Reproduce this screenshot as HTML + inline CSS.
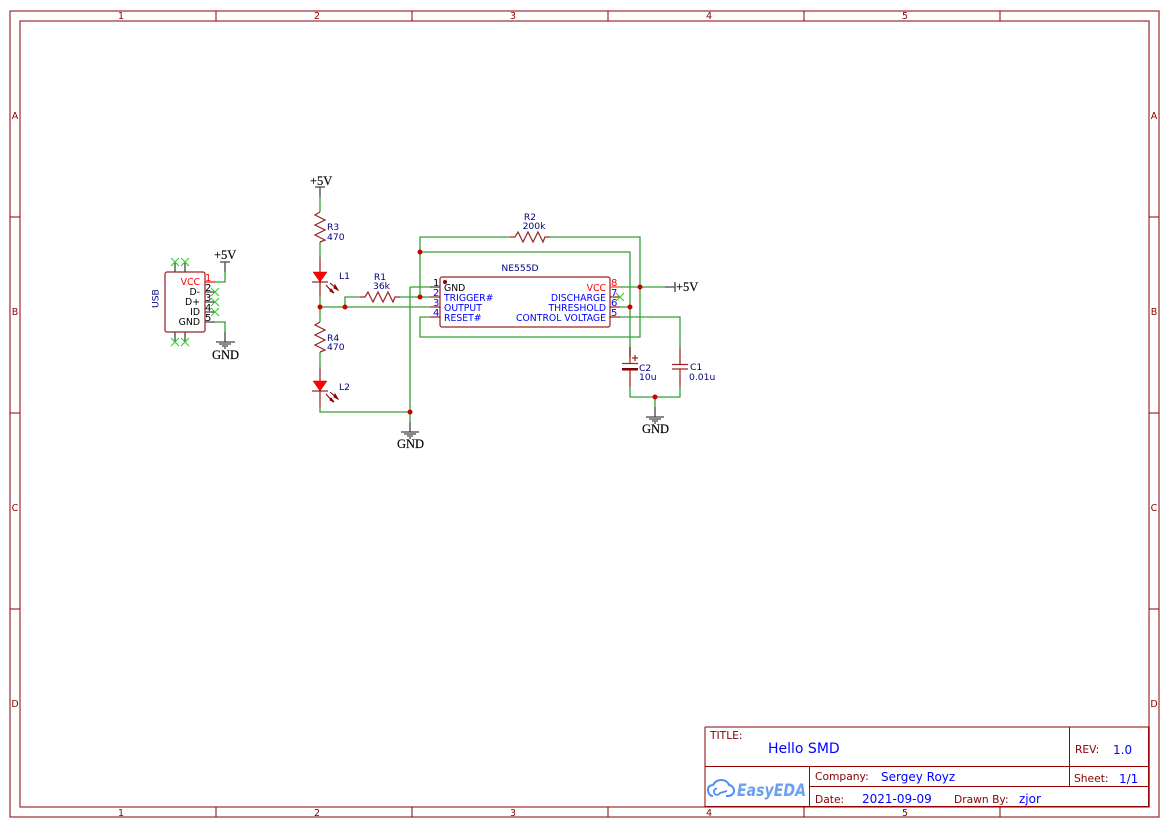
<!DOCTYPE html>
<html><head><meta charset="utf-8"><style>
html,body{margin:0;padding:0;background:#fff;width:1169px;height:828px;overflow:hidden}
svg{display:block}
text{font-family:"DejaVu Sans","Liberation Sans",sans-serif;white-space:pre}
.s{font-family:"Liberation Serif",serif;font-size:12.5px;fill:#000;stroke:#000;stroke-width:.15}
.f{stroke:#880000;fill:none;stroke-width:1.25;opacity:.8}
.w{stroke:#008800;fill:none;stroke-width:1.3;opacity:.8}
.p{stroke:#880000;fill:none;stroke-width:1.25;opacity:.85}
.g{stroke:#000;fill:none;stroke-width:1}
.x{stroke:#33cc33;fill:none;stroke-width:1.1}
.b{fill:#0000ff;font-size:9.3px}
.n{fill:#000080;font-size:9.2px}
.m{fill:#880000;font-size:9.5px;text-anchor:middle}
.t{fill:#880000;font-size:10.7px}
.v{fill:#0000ff;font-size:12px}
</style></head><body>
<svg width="1169" height="828" viewBox="0 0 1169 828" xmlns="http://www.w3.org/2000/svg">
<rect x="10" y="11" width="1149" height="806" class="f"/>
<rect x="20" y="21" width="1129" height="786" class="f"/>
<path class="f" d="M216 11V21M412 11V21M608 11V21M804 11V21M1000 11V21M216 807V817M412 807V817M608 807V817M804 807V817M1000 807V817M10 217H20M10 413H20M10 609H20M1149 217H1159M1149 413H1159M1149 609H1159"/>
<g class="m">
<text x="121" y="19">1</text><text x="317" y="19">2</text><text x="513" y="19">3</text><text x="709" y="19">4</text><text x="905" y="19">5</text>
<text x="121" y="816">1</text><text x="317" y="816">2</text><text x="513" y="816">3</text><text x="709" y="816">4</text><text x="905" y="816">5</text>
<text x="15" y="119">A</text><text x="15" y="315">B</text><text x="15" y="511">C</text><text x="15" y="707">D</text>
<text x="1154" y="119">A</text><text x="1154" y="315">B</text><text x="1154" y="511">C</text><text x="1154" y="707">D</text>
</g>

<!-- title block -->
<path class="f" d="M705 727H1149V807M705 727V807"/>
<path d="M705 766.500H1149M809.500 767V807M810 786.500H1149M1069.500 727V787M705 806.500H1149M1148.500 727V807" stroke="#990000" fill="none"/>
<text class="t" x="710" y="739">TITLE:</text>
<text x="768" y="753" fill="#0000ff" font-size="14">Hello SMD</text>
<text class="t" x="815" y="780">Company:</text>
<text class="v" x="881" y="781">Sergey Royz</text>
<text class="t" x="815" y="803">Date:</text>
<text class="v" x="862" y="803">2021-09-09</text>
<text class="t" x="954" y="803">Drawn By:</text>
<text class="v" x="1019" y="803">zjor</text>
<text class="t" x="1075" y="753">REV:</text>
<text class="v" x="1113" y="754">1.0</text>
<text class="t" x="1074" y="782">Sheet:</text>
<text class="v" x="1119" y="783">1/1</text>
<path d="M713 796C709.500 796 708 792.500 708 790C708 786.500 710.500 785 713 785C715 781.500 718 780 721 780C725 780 728 782 729 785C732 785.500 734 788 734 790.500C734 794 731 796 728 796H726" fill="none" stroke="#4f8cf0" stroke-width="2"/>
<path d="M717 788.500A3.200 3.200 0 1 0 720 793L727 791" fill="none" stroke="#4f8cf0" stroke-width="1.800"/>
<text x="737" y="796" font-size="16.500" font-weight="bold" font-style="italic" fill="#6a9ff4" textLength="69" lengthAdjust="spacingAndGlyphs">EasyEDA</text>

<!-- wires -->
<path class="w" d="M215 282H225V272M215 322H225V332M320 197V212M320 242V257M320 297V322M320 352V367M320 407V412H410M320 307H430M345 307V297H360M400 297H430M410 287H430M410 287V422M420 297V237H510M550 237H640V337H420V317H430M420 252H630V357M620 287H665M620 307H630M620 317H680V347M630 387V397H680V387M655 397V407"/>

<!-- gray power stubs -->
<g stroke="#444" fill="none" stroke-width="1.300">
<path d="M225 262V272M220 262H230M225 332V342M216 342H235M219 344H231M222 346H228M224 348H226"/>
<path d="M320 187V197M315 187H325"/>
<path d="M410 422V432M401 432H419M404 434H416M407 436H413M409 438H411"/>
<path d="M655 407V417M646 417H664M649 419H661M652 421H658M654 423H656"/>
<path d="M665 287H675M675 282V292"/>
</g>

<!-- USB -->
<rect x="165" y="272" width="40" height="60" rx="2" class="p"/>
<path stroke="#ee2020" stroke-width="1.300" d="M205 282H215" fill="none"/>
<path stroke="#444" stroke-width="1.300" fill="none" d="M205 292H215M205 302H215M205 312H215M205 322H215M175 262V272M185 262V272M175 332V342M185 332V342"/>
<path class="x" d="M171 258L179 266M179 258L171 266M181 258L189 266M189 258L181 266M171 338L179 346M179 338L171 346M181 338L189 346M189 338L181 346M211 288L219 296M219 288L211 296M211 298L219 306M219 298L211 306M211 308L219 316M219 308L211 316"/>
<g font-size="9.300" text-anchor="end">
<text x="200" y="285" fill="#ff0000">VCC</text>
<text x="200" y="295" fill="#000">D-</text>
<text x="200" y="305" fill="#000">D+</text>
<text x="200" y="315" fill="#000">ID</text>
<text x="200" y="325" fill="#000">GND</text>
</g>
<g font-size="10">
<text x="205" y="281" fill="#ff0000">1</text>
<text x="205" y="291" fill="#000">2</text>
<text x="205" y="301" fill="#000">3</text>
<text x="205" y="311" fill="#000">4</text>
<text x="205" y="321" fill="#000">5</text>
</g>
<text class="n" transform="translate(158.500,308) rotate(-90)">USB</text>
<text class="s" x="214" y="259">+5V</text>
<text class="s" x="212" y="359">GND</text>

<!-- R3/R4 -->
<path class="p" d="M320 212L315 215L325 220L315 225L325 230L315 235L325 240L320 242"/>
<path class="p" d="M320 322L315 325L325 330L315 335L325 340L315 345L325 350L320 352"/>
<path class="p" d="M320 257V272M320 282V297M320 367V381M320 391V407"/>
<path fill="#ff0000" stroke="#cc0000" stroke-width=".5" d="M313 272H327L320 282Z"/>
<path fill="#ff0000" stroke="#cc0000" stroke-width=".5" d="M313 381H327L320 391Z"/>
<path class="p" d="M312 282H328M312 391H328"/>
<g stroke="#880000" fill="#cc0000">
<path d="M326 285L333 293M330 283L337 289M331 289L334 293L330 291ZM335 285L338 290L334 288Z"/>
<path d="M326 394L333 402M330 392L337 398M331 398L334 402L330 400ZM335 394L338 399L334 397Z"/>
</g>
<text class="n" x="327" y="230">R3</text><text class="n" x="327" y="240">470</text>
<text class="n" x="327" y="341">R4</text><text class="n" x="327" y="350">470</text>
<text class="n" x="339" y="279">L1</text><text class="n" x="339" y="390">L2</text>
<text class="s" x="310" y="185">+5V</text>

<!-- R1/R2 -->
<path class="p" d="M360 297H365L368 292L373 302L378 292L383 302L388 292L393 302L395 297H400"/>
<path class="p" d="M510 237H515L518 232L523 242L528 232L533 242L538 232L543 242L545 237H550"/>
<text class="n" x="380" y="280" text-anchor="middle">R1</text><text class="n" x="381.500" y="289" text-anchor="middle">36k</text>
<text class="n" x="530" y="220" text-anchor="middle">R2</text><text class="n" x="534" y="229" text-anchor="middle">200k</text>

<!-- IC -->
<rect x="440" y="277" width="170" height="50" rx="2" class="p"/>
<circle cx="445" cy="282" r="2" fill="#880000"/>
<path class="p" d="M430 297H440M430 307H440M430 317H440M610 297H620M610 307H620M610 317H620"/>
<path stroke="#444" stroke-width="1.300" fill="none" d="M430 287H440"/>
<path stroke="#ff4040" stroke-width="1.300" fill="none" d="M610 287H620"/>
<path class="x" d="M616 293L624 301M624 293L616 301"/>
<text class="n" x="520" y="271" text-anchor="middle">NE555D</text>
<text x="444" y="291" font-size="9.300" fill="#000">GND</text>
<text class="b" x="444" y="301">TRIGGER#</text>
<text class="b" x="444" y="311">OUTPUT</text>
<text class="b" x="444" y="321">RESET#</text>
<text x="606" y="291" font-size="9.300" fill="#ff0000" text-anchor="end">VCC</text>
<text class="b" x="606" y="301" text-anchor="end">DISCHARGE</text>
<text class="b" x="606" y="311" text-anchor="end">THRESHOLD</text>
<text class="b" x="606" y="321" text-anchor="end">CONTROL VOLTAGE</text>
<g font-size="10">
<text x="433" y="286" fill="#000">1</text>
<text x="433" y="296" fill="#0000ff">2</text>
<text x="433" y="306" fill="#0000ff">3</text>
<text x="433" y="316" fill="#0000ff">4</text>
<text x="611" y="286" fill="#ff0000">8</text>
<text x="611" y="296" fill="#0000ff">7</text>
<text x="611" y="306" fill="#0000ff">6</text>
<text x="611" y="316" fill="#0000ff">5</text>
</g>

<!-- Caps -->
<path class="p" d="M630 347V363M630 370V387M680 347V364.500M680 369V387M672 364.500H688M672 369H688M622 363.500H638"/>
<rect x="622" y="368" width="16" height="2.500" fill="#880000"/>
<path class="p" d="M632 358H638M635 355V361"/>
<text class="n" x="639" y="371">C2</text><text class="n" x="639" y="380">10u</text>
<text class="n" x="690" y="370">C1</text><text class="n" x="689" y="380">0.01u</text>

<text class="s" x="397" y="448">GND</text>
<text class="s" x="642" y="433">GND</text>
<text class="s" x="676" y="291">+5V</text>

<!-- junctions -->
<g fill="#cc0000">
<circle cx="320" cy="307" r="2.500"/><circle cx="345" cy="307" r="2.500"/><circle cx="420" cy="297" r="2.500"/><circle cx="420" cy="252" r="2.500"/><circle cx="410" cy="412" r="2.500"/><circle cx="640" cy="287" r="2.500"/><circle cx="630" cy="307" r="2.500"/><circle cx="655" cy="397" r="2.500"/>
</g>
</svg>
</body></html>
